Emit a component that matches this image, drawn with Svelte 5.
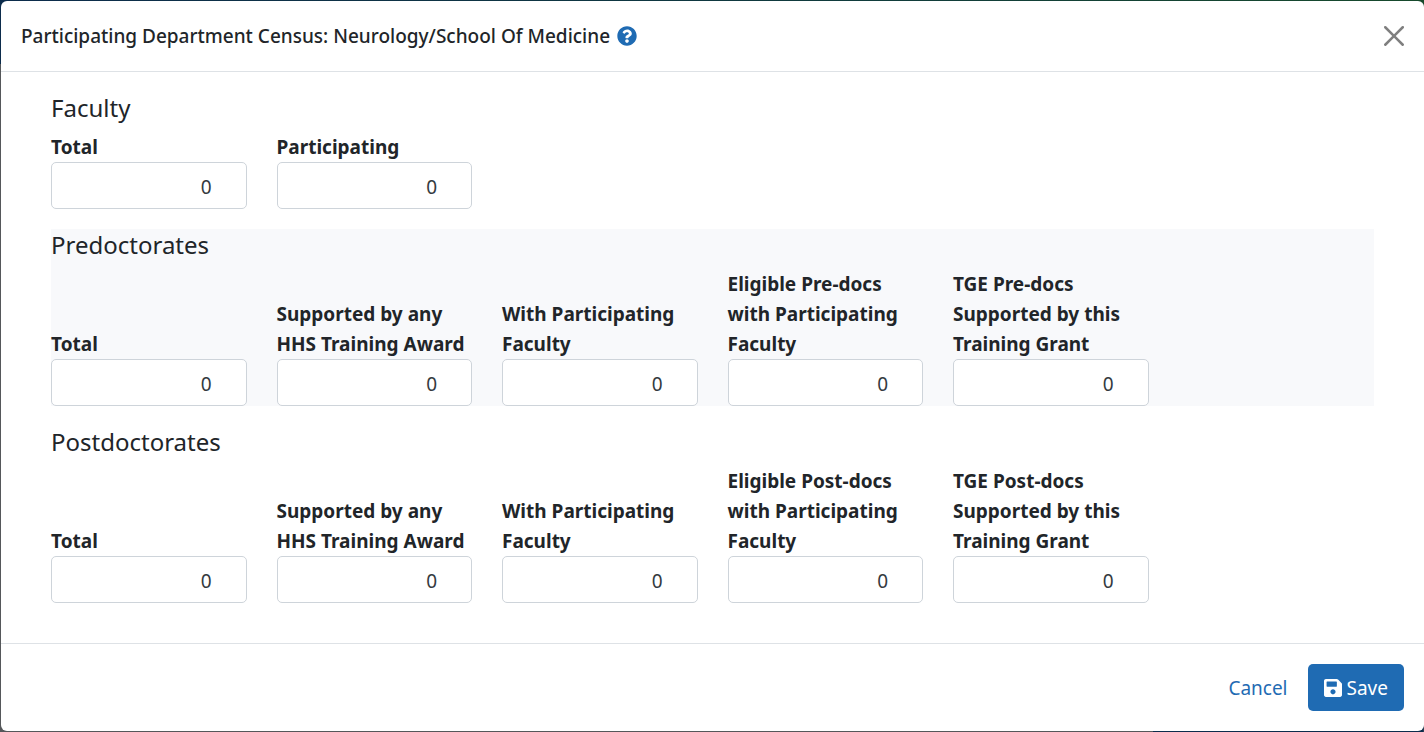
<script>
  const sections = $state([
    {
      id: 'faculty',
      title: 'Faculty',
      fields: [
        { label: 'Total', value: '0' },
        { label: 'Participating', value: '0' }
      ]
    },
    {
      id: 'predoc',
      title: 'Predoctorates',
      shaded: true,
      fields: [
        { label: 'Total', value: '0' },
        { label: 'Supported by any HHS Training Award', value: '0' },
        { label: 'With Participating Faculty', value: '0' },
        { label: 'Eligible Pre-docs with Participating Faculty', value: '0' },
        { label: 'TGE Pre-docs Supported by this Training Grant', value: '0' }
      ]
    },
    {
      id: 'postdoc',
      title: 'Postdoctorates',
      fields: [
        { label: 'Total', value: '0' },
        { label: 'Supported by any HHS Training Award', value: '0' },
        { label: 'With Participating Faculty', value: '0' },
        { label: 'Eligible Post-docs with Participating Faculty', value: '0' },
        { label: 'TGE Post-docs Supported by this Training Grant', value: '0' }
      ]
    }
  ]);
</script>

<div class="backdrop">
  <div class="modal" role="dialog" aria-labelledby="modal-title">
    <header>
      <h1 id="modal-title">Participating Department Census: Neurology/School Of Medicine</h1>
      <button type="button" class="icon help" aria-label="Help">
        <svg viewBox="0 0 512 512" width="20" height="20" aria-hidden="true">
          <path fill="currentColor" d="M504 256c0 136.997-111.043 248-248 248S8 392.997 8 256C8 119.083 119.043 8 256 8s248 111.083 248 248zM262.655 90c-54.497 0-89.255 22.957-116.549 63.758-3.536 5.286-2.353 12.415 2.715 16.258l34.699 26.31c5.205 3.947 12.621 3.008 16.665-2.122 17.864-22.658 30.113-35.797 57.303-35.797 20.429 0 45.698 13.148 45.698 32.958 0 14.976-12.363 22.667-32.534 33.976C247.128 238.528 216 254.941 216 296v4c0 6.627 5.373 12 12 12h56c6.627 0 12-5.373 12-12v-1.333c0-28.462 83.186-29.647 83.186-106.667 0-58.002-60.165-102-116.531-102zM256 338c-25.365 0-46 20.635-46 46 0 25.364 20.635 46 46 46s46-20.636 46-46c0-25.365-20.635-46-46-46z" />
        </svg>
      </button>
      <button type="button" class="icon close" aria-label="Close">
        <svg viewBox="0 0 16 16" width="20" height="20" aria-hidden="true">
          <path fill="currentColor" d="M.293.293a1 1 0 0 1 1.414 0L8 6.586 14.293.293a1 1 0 1 1 1.414 1.414L9.414 8l6.293 6.293a1 1 0 0 1-1.414 1.414L8 9.414l-6.293 6.293a1 1 0 0 1-1.414-1.414L6.586 8 .293 1.707a1 1 0 0 1 0-1.414z" />
        </svg>
      </button>
    </header>

    <form id="census">
      {#each sections as section}
        <section class:shaded={section.shaded}>
          <h2>{section.title}</h2>
          <div class="fields">
            {#each section.fields as field, i}
              <div class="field">
                <label for="{section.id}-{i}">{field.label}</label>
                <input id="{section.id}-{i}" type="text" inputmode="numeric" bind:value={field.value} />
              </div>
            {/each}
          </div>
        </section>
      {/each}
    </form>

    <footer>
      <button type="button" class="btn cancel">Cancel</button>
      <button type="button" class="btn save">
        <svg viewBox="0 32 448 448" width="18" height="18" aria-hidden="true">
          <path fill="currentColor" d="M433.941 129.941l-83.882-83.882A48 48 0 0 0 316.118 32H48C21.49 32 0 53.49 0 80v352c0 26.51 21.49 48 48 48h352c26.51 0 48-21.49 48-48V163.882a48 48 0 0 0-14.059-33.941zM224 416c-35.346 0-64-28.654-64-64 0-35.346 28.654-64 64-64s64 28.654 64 64c0 35.346-28.654 64-64 64zm96-304.52V212c0 6.627-5.373 12-12 12H76c-6.627 0-12-5.373-12-12V108c0-6.627 5.373-12 12-12h228.52c3.183 0 6.235 1.264 8.485 3.515l3.48 3.48A11.996 11.996 0 0 1 320 111.48z" />
        </svg>
        Save
      </button>
    </footer>
  </div>
</div>

<style>
  :global(body) {
    margin: 0;
    background: #55575a;
  }

  .backdrop,
  .backdrop * {
    box-sizing: border-box;
  }

  .backdrop {
    padding: 1px 0 1px 1px;
    background:
      linear-gradient(90deg, #0c2c4c, #0f3840 50%, #174a2c) top / 100% 8px no-repeat,
      linear-gradient(#0c2c4c, #0c2c4c) bottom right / 19% 8px no-repeat,
      linear-gradient(#0c2c4c 0 64px, #55575a 64px);
    color: #212529;
    font-family: 'Segoe UI', 'Noto Sans', 'Open Sans', sans-serif;
    font-size: 19px;
    line-height: 30px;
  }

  .modal {
    background: #fff;
    border-radius: 6px;
  }

  header {
    display: flex;
    align-items: center;
    padding: 20px;
    border-bottom: 1px solid #dee2e6;
  }

  h1,
  h2 {
    margin: 0;
    font-weight: 500;
  }

  h1 {
    font-size: 19px;
    line-height: 30px;
  }

  h2 {
    padding-top: 1px;
    margin-bottom: 9px;
    font-size: 24px;
    font-weight: 400;
    line-height: 30px;
  }

  button,
  input {
    font: inherit;
  }

  button {
    border: 0;
    background: none;
    cursor: pointer;
  }

  .icon {
    display: flex;
    padding: 0;
  }

  .help {
    margin-left: 7px;
    color: #1f6bb3;
  }

  .close {
    margin-left: auto;
    color: #7f7f7f;
  }

  form {
    display: flex;
    flex-direction: column;
    gap: 20px;
    padding: 20px 50px 40px;
  }

  .shaded {
    background: #f8f9fb;
  }

  .fields {
    display: grid;
    grid-template-columns: repeat(6, minmax(0, 1fr));
    align-items: end;
    column-gap: 30px;
  }

  .field {
    display: flex;
    flex-direction: column;
  }

  label {
    font-weight: 700;
  }

  input {
    width: 100%;
    height: 47px;
    padding: 9px 34px 7px 15px;
    border: 1px solid #ced4da;
    border-radius: 5px;
    background: #fff;
    color: #343a40;
    text-align: right;
  }

  footer {
    display: flex;
    justify-content: flex-end;
    gap: 4px;
    padding: 20px;
    border-top: 1px solid #dee2e6;
  }

  .btn {
    display: flex;
    align-items: center;
    gap: 5px;
    height: 47px;
    padding: 1px 16px 0;
    border-radius: 5px;
  }

  .cancel {
    color: #1f6bb3;
  }

  .save {
    background: #1f6bb3;
    color: #fff;
  }
</style>
